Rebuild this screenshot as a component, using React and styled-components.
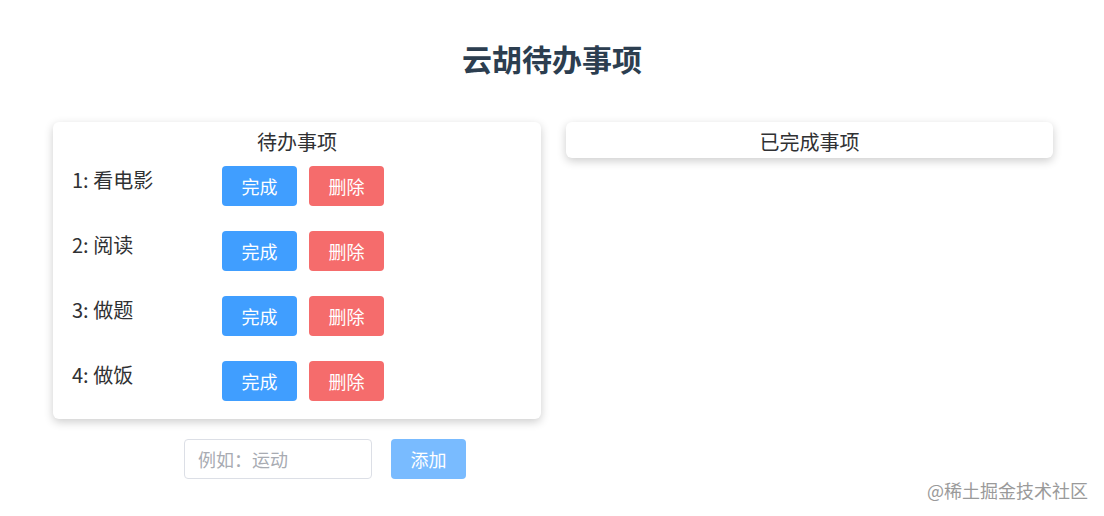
import React, { useState } from 'react'
import styled, { createGlobalStyle } from 'styled-components';

const GlobalStyle = createGlobalStyle`
    body {
        margin: 0;
        background: #fff;
        font-family: "Noto Sans CJK SC", "Noto Sans", sans-serif;
        color: #2c3e50;
    }
`;

const initialTodos = ['看电影', '阅读', '做题', '做饭'];

export default function App() {
    const [todos] = useState(initialTodos);
    const [done] = useState([]);

    return (
        <Page>
            <GlobalStyle />
            <Title>云胡待办事项</Title>

            <Columns>
                <Column>
                    <Card>
                        <CardTitle>待办事项</CardTitle>
                        {todos.map((item, i) => (
                            <TodoRow key={item}>
                                <TodoText>{i + 1}: {item}</TodoText>
                                <Button $variant='primary'>完成</Button>
                                <Button $variant='danger'>删除</Button>
                            </TodoRow>
                        ))}
                    </Card>

                    <AddBar>
                        <Input placeholder='例如：运动' />
                        <Button $variant='disabled'>添加</Button>
                    </AddBar>
                </Column>

                <Column>
                    <Card $empty>
                        <CardTitle>已完成事项</CardTitle>
                        {done.map((item, i) => (
                            <TodoRow key={item}>
                                <TodoText>{i + 1}: {item}</TodoText>
                            </TodoRow>
                        ))}
                    </Card>
                </Column>
            </Columns>

            <Watermark>@稀土掘金技术社区</Watermark>
        </Page>
    );
}

const Page = styled.div`
    position: relative;
    width: 1104px;
    height: 516px;
    overflow: hidden;
`;

const Title = styled.h1`
    margin: 0;
    padding-top: 38px;
    height: 84px;
    box-sizing: border-box;
    text-align: center;
    font-size: 30px;
    line-height: 40px;
    font-weight: 700;
    color: #2c3e50;
`;

const Columns = styled.div`
    width: 1000px;
    margin: 38px 0 0 53px;
    display: grid;
    grid-template-columns: 488px 487px;
    gap: 25px;
    align-items: start;
`;

const Column = styled.div`
    display: flex;
    flex-direction: column;
`;

const Card = styled.div`
    background: #fff;
    border-radius: 6px;
    box-shadow: 0 3px 10px rgba(0, 0, 0, 0.2);
    padding: 4px 19px ${p => (p.$empty ? '0' : '18px')};
`;

const CardTitle = styled.div`
    text-align: center;
    font-size: 20px;
    line-height: 32px;
    color: #303133;
    margin-bottom: 8px;

    &:last-child {
        margin-bottom: 0;
    }
`;

const TodoRow = styled.div`
    display: flex;
    align-items: flex-start;
    gap: 12px;

    & + & {
        margin-top: 25px;
    }
`;

const TodoText = styled.div`
    width: 138px;
    font-size: 20px;
    line-height: 28px;
    color: #303133;
`;

const colors = {
    primary: '#409eff',
    danger: '#f56c6c',
    disabled: '#79bbff',
};

const Button = styled.button`
    width: 75px;
    height: 40px;
    border: none;
    border-radius: 4px;
    background: ${p => colors[p.$variant]};
    color: #fff;
    font-family: inherit;
    font-size: 18px;
    padding: 0;
    cursor: ${p => (p.$variant === 'disabled' ? 'not-allowed' : 'pointer')};
`;

const AddBar = styled.div`
    display: flex;
    gap: 19px;
    margin: 20px 0 0 131px;
`;

const Input = styled.input`
    width: 188px;
    height: 40px;
    box-sizing: border-box;
    border: 1px solid #dcdfe6;
    border-radius: 4px;
    padding: 0 13px;
    font-family: inherit;
    font-size: 18px;
    color: #606266;
    outline: none;

    &::placeholder {
        color: #a8abb2;
    }
`;

const Watermark = styled.div`
    position: absolute;
    right: 16px;
    bottom: 14px;
    font-size: 18px;
    line-height: 24px;
    color: #9a9a9a;
`;
